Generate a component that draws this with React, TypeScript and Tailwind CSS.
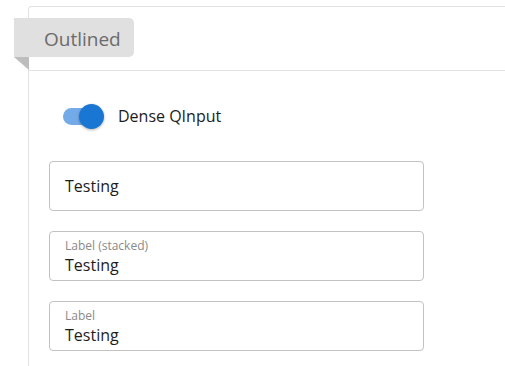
import React from "react";

function Field({ label, value }: { label?: string; value: string }) {
  return (
    <div className="w-[375px] h-[50px] rounded-[4px] border border-[#c2c2c2] pl-[15px] flex flex-col justify-center">
      {label && (
        <div className="text-[12px] leading-[16px] text-[#8a8a8a] mt-[1px]">{label}</div>
      )}
      <div className="text-[16px] leading-[22px] text-[#1d1d1d]">{value}</div>
    </div>
  );
}

export default function App() {
  return (
    <div
      className="w-[505px] h-[366px] bg-white overflow-hidden"
      style={{ fontFamily: '"Open Sans", "Noto Sans", sans-serif' }}
    >
      <div className="relative ml-[28px] mt-[6px] w-[520px] h-[400px] border-l border-t border-[#e2e2e2] rounded-tl-[4px]">
        <div className="h-[64px] border-b border-[#e2e2e2]" />
        <div className="absolute left-[-15px] top-[11px] flex flex-col">
          <div className="w-[120px] h-[39px] bg-[#e0e0e0] rounded-r-[5px] flex items-center pl-[30px] pt-[3px] text-[19px] text-[#6b6b6b]">
            Outlined
          </div>
          <svg width="15" height="13" className="block">
            <polygon points="0,0 15,0 15,13" fill="#bdbdbd" />
          </svg>
        </div>
        <div className="pl-[20px] pt-[30px] flex flex-col">
          <div className="flex items-center h-[30px] ml-[14px]">
            <div className="relative w-[36px] h-[17px]">
              <div className="absolute left-0 top-0 w-[34px] h-[17px] rounded-full bg-[#74aae8]" />
              <div className="absolute left-[16px] top-[-4px] w-[25px] h-[25px] rounded-full bg-[#1976d2] shadow-[0_1px_3px_rgba(0,0,0,0.3)]" />
            </div>
            <span className="ml-[19px] text-[16px] text-[#1d1d1d]">Dense QInput</span>
          </div>
          <div className="flex flex-col gap-[20px] mt-[30px]">
            <Field value="Testing" />
            <Field label="Label (stacked)" value="Testing" />
            <Field label="Label" value="Testing" />
          </div>
        </div>
      </div>
    </div>
  );
}
